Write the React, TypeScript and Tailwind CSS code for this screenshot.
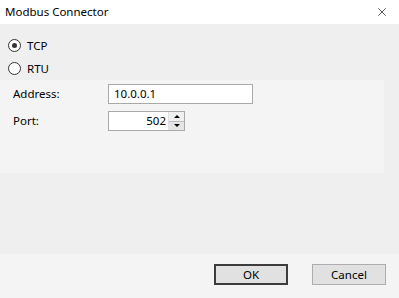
import { X } from 'lucide-react'

function Radio({ checked, label }: { checked?: boolean; label: string }) {
  return (
    <div className="flex items-center h-[23px]">
      <span className="ml-[8px] w-[13px] h-[13px] rounded-full border border-[#333] bg-white flex items-center justify-center">
        {checked && <span className="w-[5px] h-[5px] rounded-full bg-[#333]" />}
      </span>
      <span className="ml-[6px] text-[11.5px] text-black">{label}</span>
    </div>
  )
}

export default function App() {
  return (
    <div
      className="w-[399px] h-[298px] bg-[#efefef] flex flex-col overflow-hidden"
      style={{ fontFamily: '"Noto Sans", "Liberation Sans", sans-serif' }}
    >
      {/* Title bar */}
      <div className="h-[24px] bg-white flex items-center justify-between shrink-0">
        <span className="ml-[5px] text-[11.5px] text-black">Modbus Connector</span>
        <X className="w-[14px] h-[14px] mr-[10px] text-black" strokeWidth={1.1} />
      </div>

      {/* Mode */}
      <div className="pt-[10px] h-[56px] shrink-0">
        <Radio checked label="TCP" />
        <Radio label="RTU" />
      </div>

      {/* TCP panel */}
      <div className="w-[384px] h-[93px] bg-[#f4f4f4] pt-[4px] shrink-0">
        <div className="flex items-center h-[20px]">
          <span className="ml-[13px] w-[95px] text-[11.5px] text-black">Address:</span>
          <div className="w-[145px] h-[20px] border border-[#a9a9a9] bg-white flex items-center pl-[5px] text-[11.5px] text-black">
            10.0.0.1
          </div>
        </div>
        <div className="flex items-center h-[20px] mt-[7px]">
          <span className="ml-[13px] w-[95px] text-[11.5px] text-black">Port:</span>
          <div className="w-[77px] h-[20px] border border-[#a9a9a9] bg-white flex items-center">
            <span className="flex-1 text-right pr-[2px] text-[11.5px] text-black">502</span>
            <div className="w-[16px] h-[18px] flex flex-col border-l border-[#e0e0e0]">
              <div className="flex-1 bg-[#f0f0f0] border-b border-[#bdbdbd] flex items-center justify-center">
                <span className="w-0 h-0 border-l-[3px] border-r-[3px] border-b-[3px] border-l-transparent border-r-transparent border-b-black" />
              </div>
              <div className="flex-1 bg-[#e5e5e5] flex items-center justify-center">
                <span className="w-0 h-0 border-l-[3px] border-r-[3px] border-t-[3px] border-l-transparent border-r-transparent border-t-black" />
              </div>
            </div>
          </div>
        </div>
      </div>

      <div className="flex-1" />

      {/* Buttons */}
      <div className="h-[44px] bg-[#f4f4f4] flex items-start justify-end gap-[24px] pt-[10px] pr-[13px] shrink-0">
        <button className="w-[74px] h-[21px] border-2 border-[#3c3c3c] bg-[#e1e1e1] text-[11.5px] text-black flex items-center justify-center">
          OK
        </button>
        <button className="w-[74px] h-[21px] border border-[#adadad] bg-[#e1e1e1] text-[11.5px] text-black flex items-center justify-center">
          Cancel
        </button>
      </div>
    </div>
  )
}
